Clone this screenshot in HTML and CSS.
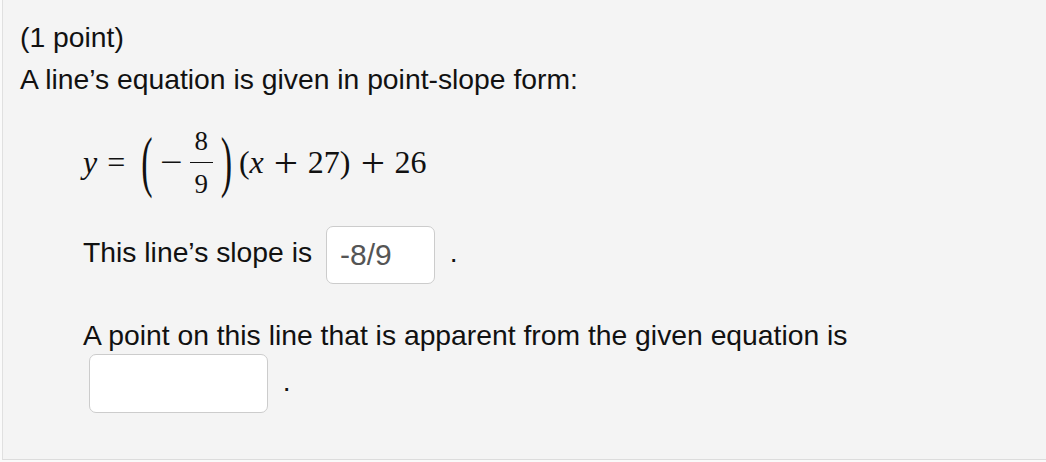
FILE: index.html
```html
<!DOCTYPE html>
<html>
<head>
<meta charset="utf-8">
<link rel="stylesheet" href="styles.css">
</head>
<body>
<div class="problem">
  <div class="points">(1 point)</div>
  <div class="intro">A line’s equation is given in point-slope form:</div>
  <div class="body">
    <div class="math">
      <span class="mi">y</span>
      <span class="mo eq">=</span>
      <span class="big lparen">(</span>
      <span class="mo minus">−</span>
      <span class="frac">
        <span class="num">8</span>
        <span class="bar"></span>
        <span class="den">9</span>
      </span>
      <span class="big rparen">)</span>
      <span class="mn">(<span class="mi">x</span><span class="op">+</span>27)<span class="op">+</span>26</span>
    </div>
    <p class="row slope">This line’s slope is <input class="ans short" type="text" value="-8/9"> .</p>
    <p class="row point">A point on this line that is apparent from the given equation is</p>
    <p class="row point-ans"><input class="ans wide" type="text" value=""> .</p>
  </div>
</div>
</body>
</html>
```

FILE: styles.css
```css
html, body {
  margin: 0;
  padding: 0;
  background: #fafafa;
}
body {
  font-family: "Liberation Sans", Arial, Helvetica, sans-serif;
  font-size: 28.3px;
  line-height: 42px;
  color: #111;
}
.problem {
  margin-left: 2px;
  height: 460px;
  box-sizing: border-box;
  background: #f4f4f4;
  border-left: 1px solid #e0e0e0;
  border-bottom: 1px solid #dcdcdc;
  padding: 16px 0 0 17px;
}
.body {
  padding-left: 63px;
}
.math {
  display: flex;
  align-items: center;
  height: 76px;
  margin-top: 24px;
  font-family: "Liberation Serif", "Times New Roman", serif;
  font-size: 32px;
  line-height: 1;
}
.mi {
  font-style: italic;
}
.eq {
  margin-left: 10px;
  margin-right: 10px;
}
.big {
  display: inline-block;
  font-size: 34px;
  transform: scaleY(1.98);
  transform-origin: center;
}
.lparen {
  margin-left: 6px;
}
.minus {
  display: inline-block;
  margin-left: 9px;
  margin-right: 8px;
  transform: scaleX(1.25);
}
.frac {
  display: inline-flex;
  flex-direction: column;
  align-items: center;
  font-size: 27px;
  width: 23px;
  margin: 0 3px 0 2px;
}
.num, .den {
  display: block;
  line-height: 30px;
}
.bar {
  display: block;
  width: 23px;
  height: 1px;
  background: #111;
  margin: 6px 0 6px;
}
.rparen {
  margin-left: 5px;
}
.mn {
  margin-left: 7px;
}
.op {
  display: inline-block;
  margin: 0 13px;
  transform: scale(1.35, 1.35);
}
.row {
  margin: 0;
}
.slope {
  margin-top: 26px;
}
.point {
  margin-top: 30px;
}
.ans {
  font-family: "Liberation Sans", Arial, Helvetica, sans-serif;
  font-size: 30px;
  color: #555;
  background: #fff;
  border: 1px solid #ccc;
  border-radius: 7px;
  box-sizing: border-box;
  height: 58px;
  padding: 0 0 0 13px;
  margin: 0 7px 0 6px;
  vertical-align: middle;
  outline: none;
}
.short {
  width: 109px;
}
.wide {
  width: 179px;
  height: 59px;
}
.point-ans {
  margin-top: -5px;
  line-height: 60px;
}
```
